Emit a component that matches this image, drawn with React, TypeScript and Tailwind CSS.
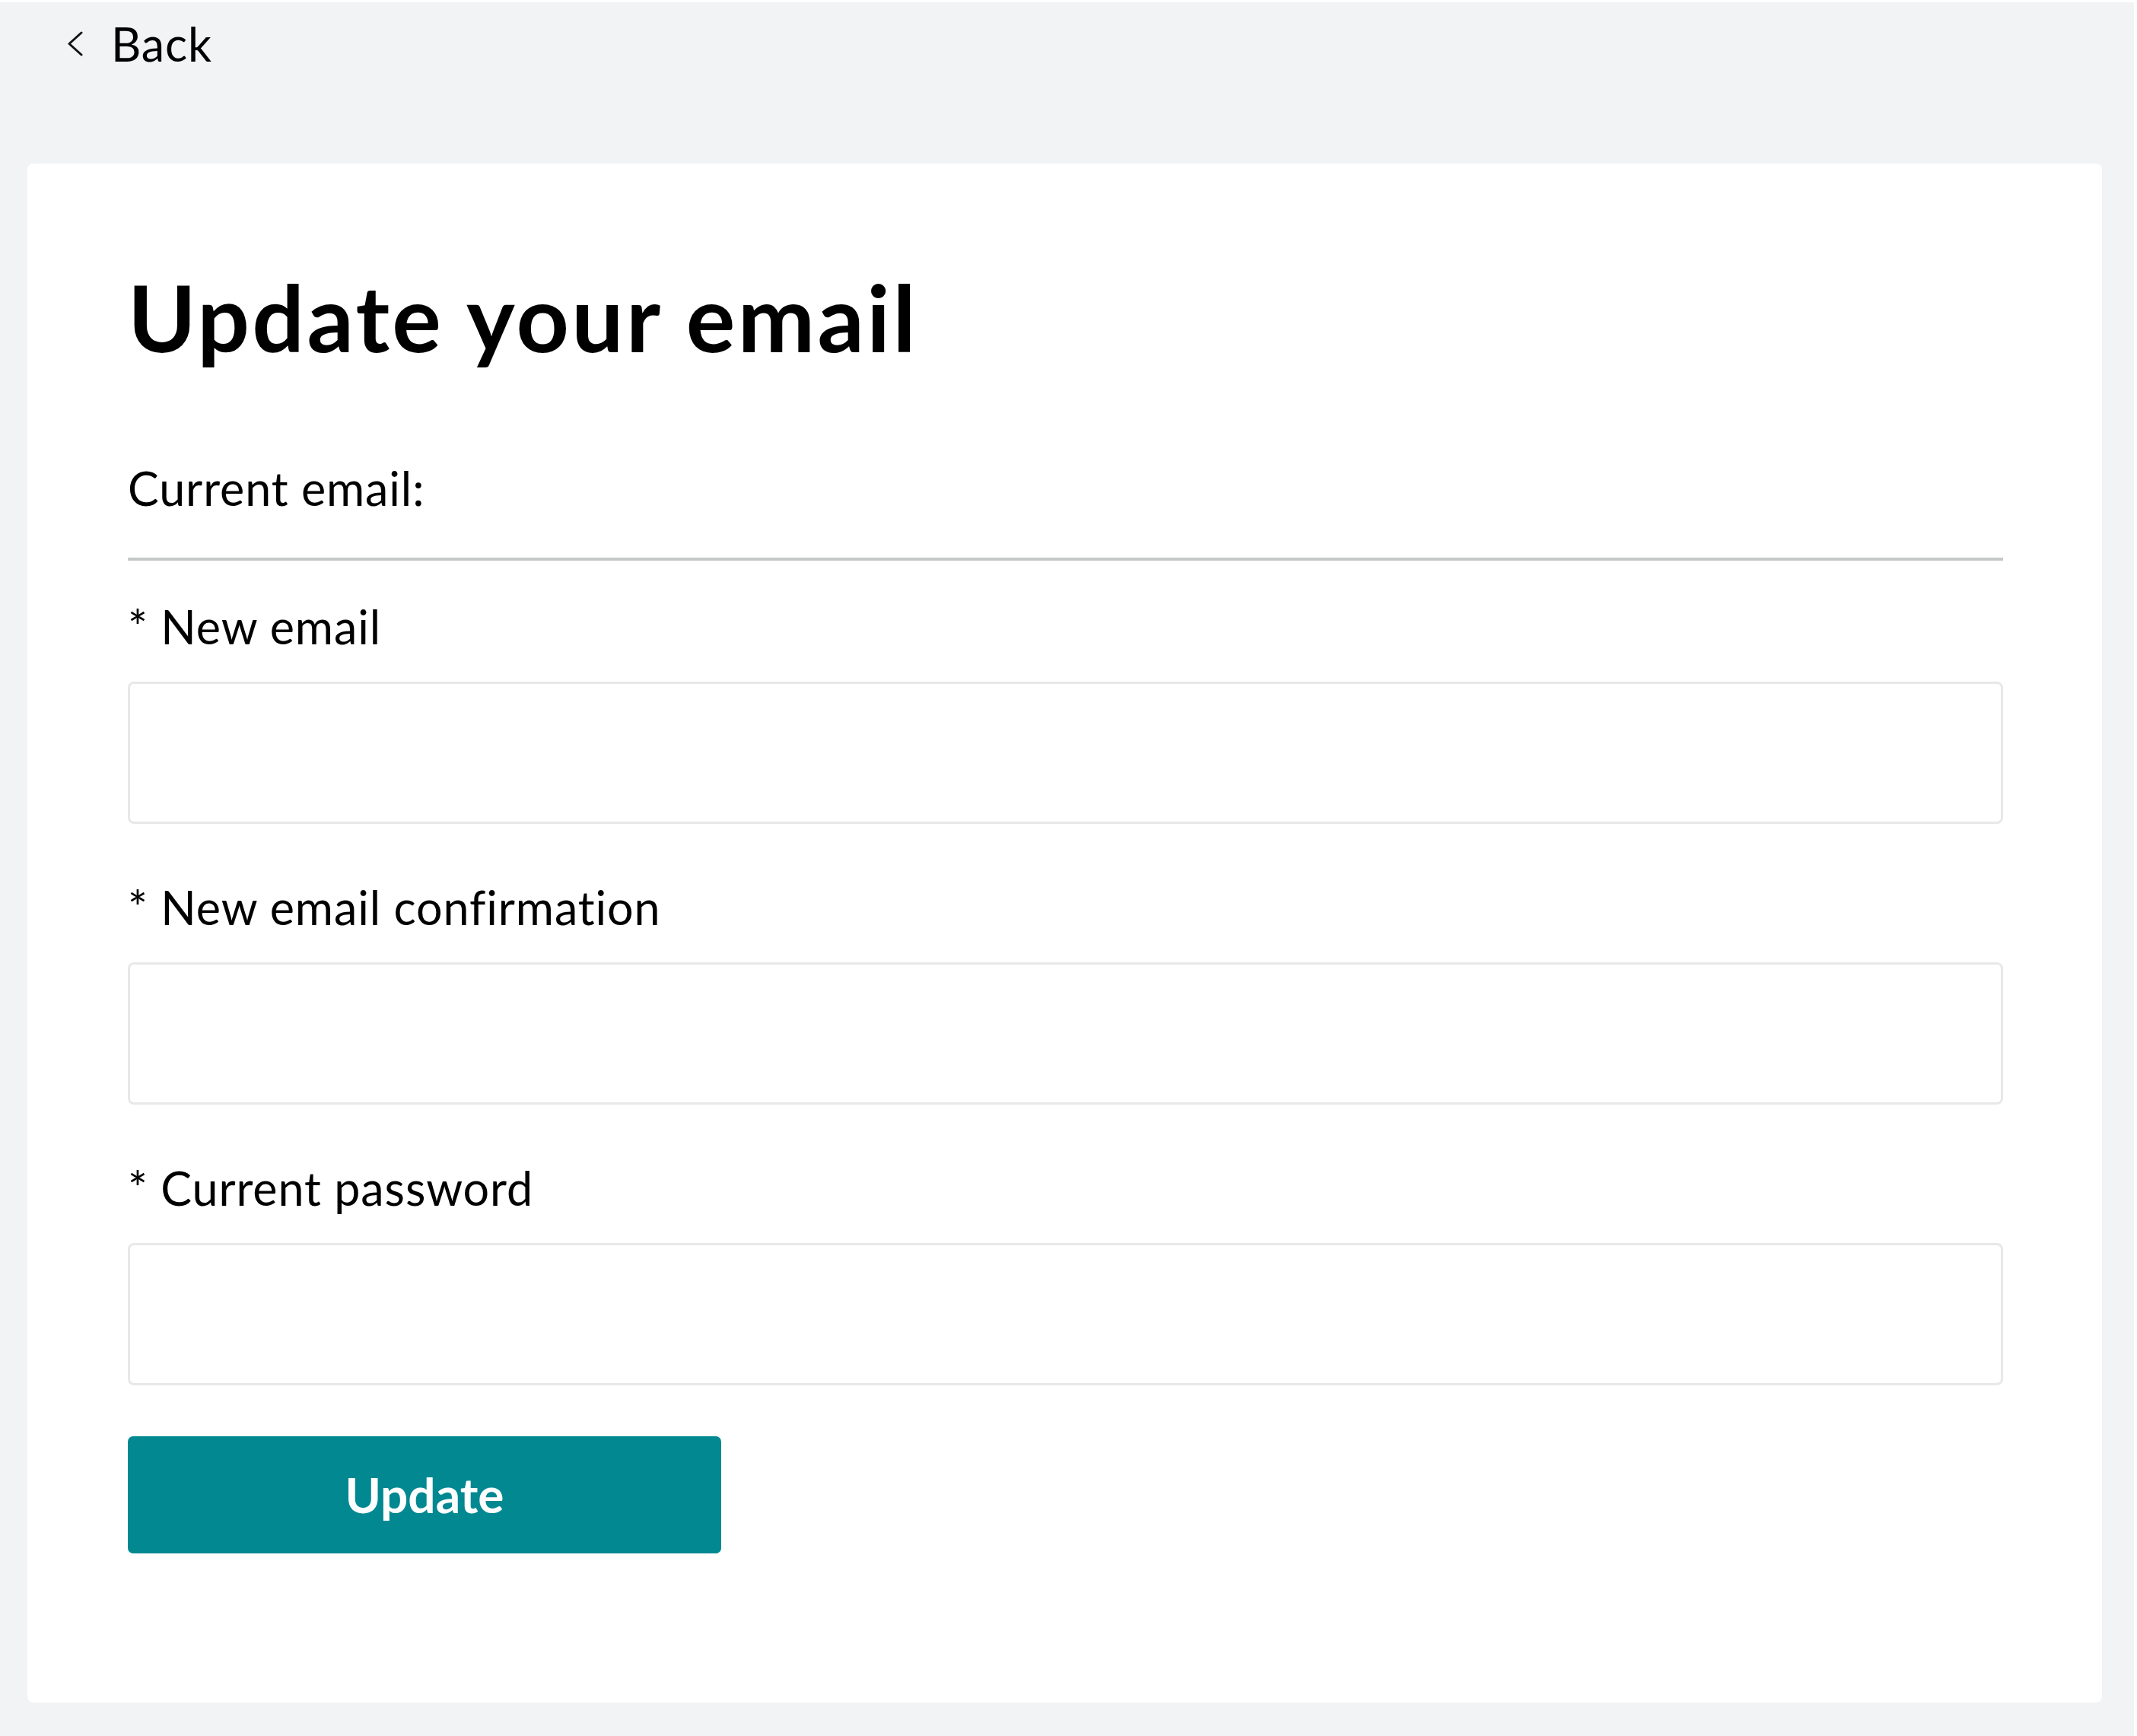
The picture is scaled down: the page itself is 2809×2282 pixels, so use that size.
import React from "react";

function Field({ label, first }: { label: string; first?: boolean }) {
  return (
    <div className={first ? "mt-[56px]" : "mt-[79px]"}>
      <div className="text-[61px] leading-[61px] tracking-[0.9px] text-black">{label}</div>
      <input
        type="text"
        className="mt-[42px] block h-[187px] w-full rounded-[8px] border-[3px] border-[#e7e8e9] bg-white outline-none"
      />
    </div>
  );
}

export default function App() {
  return (
    <div
      className="min-h-[2282px] w-full border-t-[3px] border-r-[4px] border-white bg-[#f2f3f5] pt-[24px] pb-[44px] pl-[36px] pr-[42px] [font-variant-ligatures:none]"
      style={{ fontFamily: "Lato, 'Noto Sans', sans-serif" }}
    >
      <div className="ml-[52px] flex h-[61px] items-center gap-[36px]">
        <svg width="22" height="33" viewBox="0 0 22 33" fill="none" className="shrink-0">
          <path d="M19 2 L3 16.5 L19 31" stroke="#111" strokeWidth="3" strokeLinecap="round" strokeLinejoin="round" />
        </svg>
        <span className="text-[61px] leading-[61px] tracking-[0.9px] text-black">Back</span>
      </div>

      <div className="mt-[127px] rounded-[8px] bg-white pt-[141px] pb-[196px] pl-[132px] pr-[130px]">
        <h1 className="text-[121px] font-bold leading-[121px] tracking-[3.4px] text-black">Update your email</h1>

        <div className="mt-[134px] text-[61px] leading-[61px] tracking-[0.9px] text-black">Current email:</div>
        <div className="mt-[61px] h-[4px] w-full bg-[#c6c7c8]" />

        <Field label="* New email" first />
        <Field label="* New email confirmation" />
        <Field label="* Current password" />

        <button
          type="button"
          className="mt-[67px] flex h-[154px] w-[780px] items-center justify-center rounded-[7px] bg-[#028891] text-[64px] font-bold leading-none text-white"
        >
          Update
        </button>
      </div>
    </div>
  );
}
